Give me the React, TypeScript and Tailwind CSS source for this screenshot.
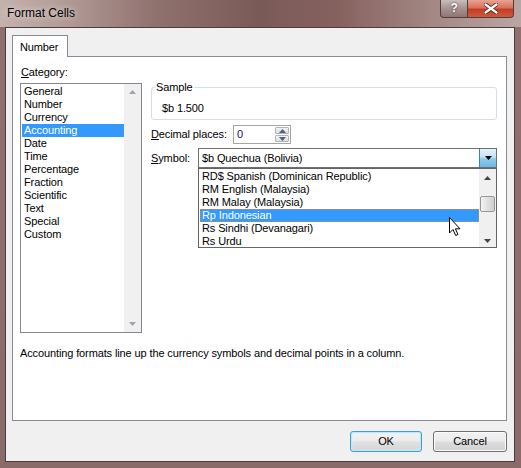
import React from "react";

function UpArrow({ color = "#404040" }: { color?: string }) {
  return (
    <svg width="7" height="4" viewBox="0 0 7 4">
      <path d="M0 4 L3.5 0 L7 4 Z" fill={color} />
    </svg>
  );
}
function DownArrow({ color = "#404040" }: { color?: string }) {
  return (
    <svg width="7" height="4" viewBox="0 0 7 4">
      <path d="M0 0 L7 0 L3.5 4 Z" fill={color} />
    </svg>
  );
}

export default function App() {
  const cats = [
    "General",
    "Number",
    "Currency",
    "Accounting",
    "Date",
    "Time",
    "Percentage",
    "Fraction",
    "Scientific",
    "Text",
    "Special",
    "Custom",
  ];
  const syms = [
    "RD$ Spanish (Dominican Republic)",
    "RM English (Malaysia)",
    "RM Malay (Malaysia)",
    "Rp Indonesian",
    "Rs Sindhi (Devanagari)",
    "Rs Urdu",
  ];
  return (
    <div className="relative w-[521px] h-[468px] overflow-hidden bg-[linear-gradient(180deg,#8f7170_0%,#8a6b6a_100%)] font-['Liberation_Sans',sans-serif] text-[11px] leading-[13px] tracking-[-0.12px] text-black">
      {/* Title bar */}
      <div className="flex items-start h-[27px] bg-[linear-gradient(90deg,#c4b2ad_0%,#b39c97_12%,#8f716e_30%,#7a5a57_50%,#86625f_65%,#a68c88_85%,#b9a6a2_100%)]">
        <div className="pl-[7px] pt-[6px] text-[12px] leading-[15px] tracking-normal text-black [text-shadow:0_0_6px_rgba(255,255,255,0.9)]">
          Format Cells
        </div>
        <div className="ml-auto mr-[7px] flex">
          <div className="w-[28px] h-[18px] rounded-bl-[4px] border border-t-0 border-[#4f3e3c] bg-[linear-gradient(180deg,#c9bdbb_0%,#a8918f_50%,#8f7674_100%)] flex items-center justify-center text-white font-bold text-[12px] [text-shadow:0_0_2px_#2a2a2a]">
            ?
          </div>
          <div className="w-[46px] h-[18px] rounded-br-[4px] border border-t-0 border-l-0 border-[#4f3e3c] bg-[linear-gradient(180deg,#e8a493_0%,#d9705a_45%,#c23e24_55%,#d0583d_100%)] flex items-center justify-center">
            <svg width="14" height="11" viewBox="0 0 14 11">
              <path
                d="M1 1 L13 10 M13 1 L1 10"
                stroke="#5a2a20"
                strokeWidth="4"
                strokeLinecap="round"
              />
              <path
                d="M1.5 1.5 L12.5 9.5 M12.5 1.5 L1.5 9.5"
                stroke="#ffffff"
                strokeWidth="2.2"
                strokeLinecap="round"
              />
            </svg>
          </div>
        </div>
      </div>

      {/* Client area */}
      <div className="ml-[5px] w-[510px] h-[435px] border border-[#4d3c3b] bg-[#f0f0f0] flex flex-col">
        {/* Tab strip */}
        <div className="pl-[6px] pt-[7px] flex">
          <div className="relative z-10 w-[56px] h-[22px] -mb-[1px] bg-white border border-b-0 border-[#898c95] pl-[7px] pt-[5px]">
            Number
          </div>
        </div>
        {/* Panel */}
        <div className="ml-[6px] w-[495px] h-[365px] bg-white border border-[#898c95] flex flex-col">
          <div className="flex">
            {/* Left column */}
            <div className="pl-[7px] pt-[9px]">
              <div className="pl-[1px]">
                <span className="underline">C</span>ategory:
              </div>
              <div className="mt-[4px] w-[122px] h-[250px] border border-[#828790] flex">
                <div className="flex-1 pt-[1px] pl-[1px]">
                  {cats.map((c) => (
                    <div
                      key={c}
                      className={
                        c === "Accounting"
                          ? "h-[13px] pl-[2px] bg-[#3399ff] text-white"
                          : "h-[13px] pl-[2px]"
                      }
                    >
                      {c}
                    </div>
                  ))}
                </div>
                <div className="w-[17px] bg-[#f0f0f0] flex flex-col items-center justify-between py-[6px]">
                  <UpArrow color="#a3a3a3" />
                  <DownArrow color="#a3a3a3" />
                </div>
              </div>
            </div>
            {/* Right column */}
            <div className="ml-[9px] w-[346px]">
              <div className="mt-[30px] relative h-[33px] rounded-[3px] border border-[#d5dfe5]">
                <div className="absolute -top-[7px] left-[3px] px-[1px] bg-white">
                  Sample
                </div>
                <div className="pl-[10px] pt-[14px]">$b 1.500</div>
              </div>
              <div className="mt-[5px] flex items-center">
                <div className="w-[82px]">
                  <span className="underline">D</span>ecimal places:
                </div>
                <div className="w-[58px] h-[19px] border border-[#a5a5a5] flex">
                  <div className="flex-1 pl-[3px] pt-[2px] text-[#1a0f5a]">0</div>
                  <div className="w-[16px] flex flex-col p-[1px] gap-[1px]">
                    <div className="flex-1 border border-[#b5b5b5] rounded-[1px] bg-[linear-gradient(180deg,#f4f4f4,#dedede)] flex items-center justify-center">
                      <UpArrow color="#4d6185" />
                    </div>
                    <div className="flex-1 border border-[#b5b5b5] rounded-[1px] bg-[linear-gradient(180deg,#f4f4f4,#dedede)] flex items-center justify-center">
                      <DownArrow color="#4d6185" />
                    </div>
                  </div>
                </div>
              </div>
              <div className="mt-[4px] flex items-start">
                <div className="w-[47px] pt-[4px]">
                  <span className="underline">S</span>ymbol:
                </div>
                <div className="relative">
                  <div className="w-[299px] h-[20px] border border-[#6f6f6f] flex bg-white">
                    <div className="flex-1 pl-[3px] pt-[3px]">$b Quechua (Bolivia)</div>
                    <div className="w-[17px] border-l border-[#3c7fb1] bg-[linear-gradient(180deg,#e6f3fb_0%,#bfe3f8_45%,#8ccbef_55%,#6ab7e6_100%)] flex items-center justify-center">
                      <svg width="7" height="4" viewBox="0 0 7 4">
                        <path d="M0 0 L7 0 L3.5 4 Z" fill="#000" />
                      </svg>
                    </div>
                  </div>
                  <div className="absolute left-0 top-[20px] w-[299px] h-[80px] border border-[#646464] bg-white flex">
                    <div className="flex-1 pt-[1px] pl-[1px]">
                      {syms.map((s) => (
                        <div
                          key={s}
                          className={
                            s === "Rp Indonesian"
                              ? "h-[13px] pl-[1px] bg-[#3399ff] text-white border border-dotted border-[#d08a3c] leading-[11px]"
                              : "h-[13px] pl-[2px]"
                          }
                        >
                          {s}
                        </div>
                      ))}
                    </div>
                    <div className="w-[17px] bg-[#f0f0f0] flex flex-col items-center pt-[7px]">
                      <UpArrow color="#454545" />
                      <div className="mt-[16px] w-[15px] h-[16px] rounded-[2px] border border-[#979797] bg-[linear-gradient(90deg,#f3f3f3,#e0e0e0_50%,#cfcfcf)]" />
                      <div className="mt-[27px]">
                        <DownArrow color="#454545" />
                      </div>
                    </div>
                  </div>
                </div>
              </div>
            </div>
          </div>
          <div className="mt-[14px] pl-[7px]">
            Accounting formats line up the currency symbols and decimal points in a column.
          </div>
        </div>
        {/* Buttons */}
        <div className="mt-[10px] flex justify-end gap-[11px] pr-[7px]">
          <div className="w-[72px] h-[21px] rounded-[3px] border border-[#3c9fd8] bg-[linear-gradient(180deg,#f4f4f4_0%,#ececec_45%,#e0e0e0_55%,#d5d5d5_100%)] shadow-[inset_0_0_0_1px_#bfe6fb,inset_0_0_2px_1px_#d6effc] flex items-center justify-center">
            OK
          </div>
          <div className="w-[74px] h-[21px] rounded-[3px] border border-[#707070] bg-[linear-gradient(180deg,#f2f2f2_0%,#ebebeb_45%,#dddddd_55%,#cfcfcf_100%)] shadow-[inset_0_0_0_1px_#fcfcfc] flex items-center justify-center">
            Cancel
          </div>
        </div>
      </div>

      {/* Mouse cursor */}
      <svg
        className="absolute left-[449px] top-[217px]"
        width="13"
        height="20"
        viewBox="0 0 13 20"
      >
        <path
          d="M0.5 0.5 L0.5 16 L4 12.5 L6.7 18.5 L9 17.5 L6.4 11.8 L11 11.8 Z"
          fill="#ffffff"
          stroke="#000000"
          strokeWidth="1"
          strokeLinejoin="round"
        />
      </svg>
    </div>
  );
}
